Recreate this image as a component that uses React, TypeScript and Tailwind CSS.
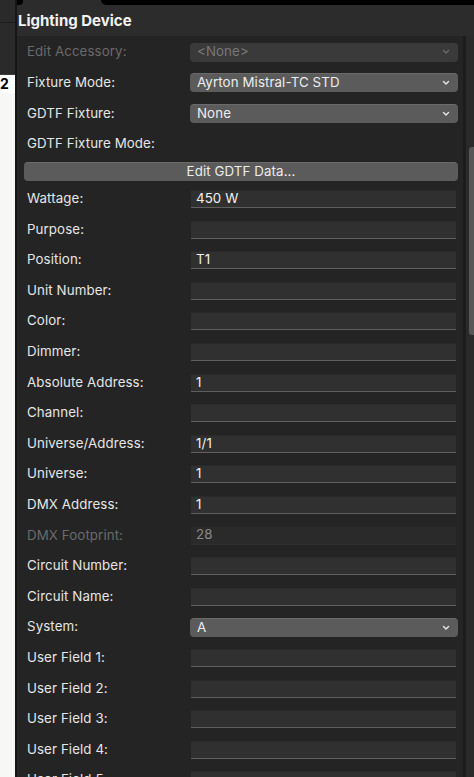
import React from "react";

type Row =
  | { kind: "select"; label: string; value: string; disabled?: boolean }
  | { kind: "text"; label: string; value?: string; disabled?: boolean }
  | { kind: "label"; label: string }
  | { kind: "button"; label: string };

const rows: Row[] = [
  { kind: "select", label: "Edit Accessory:", value: "<None>", disabled: true },
  { kind: "select", label: "Fixture Mode:", value: "Ayrton Mistral-TC STD" },
  { kind: "select", label: "GDTF Fixture:", value: "None" },
  { kind: "label", label: "GDTF Fixture Mode:" },
  { kind: "button", label: "Edit GDTF Data..." },
  { kind: "text", label: "Wattage:", value: "450 W" },
  { kind: "text", label: "Purpose:" },
  { kind: "text", label: "Position:", value: "T1" },
  { kind: "text", label: "Unit Number:" },
  { kind: "text", label: "Color:" },
  { kind: "text", label: "Dimmer:" },
  { kind: "text", label: "Absolute Address:", value: "1" },
  { kind: "text", label: "Channel:" },
  { kind: "text", label: "Universe/Address:", value: "1/1" },
  { kind: "text", label: "Universe:", value: "1" },
  { kind: "text", label: "DMX Address:", value: "1" },
  { kind: "text", label: "DMX Footprint:", value: "28", disabled: true },
  { kind: "text", label: "Circuit Number:" },
  { kind: "text", label: "Circuit Name:" },
  { kind: "select", label: "System:", value: "A" },
  { kind: "text", label: "User Field 1:" },
  { kind: "text", label: "User Field 2:" },
  { kind: "text", label: "User Field 3:" },
  { kind: "text", label: "User Field 4:" },
  { kind: "text", label: "User Field 5:" },
];

function Chevron({ dim }: { dim?: boolean }) {
  return (
    <svg width="8" height="6" viewBox="0 0 8 6" className="shrink-0">
      <path
        d="M1.5 1.5 L4 4 L6.5 1.5"
        fill="none"
        stroke={dim ? "#6b6b6b" : "#e8e8e8"}
        strokeWidth="1.4"
        strokeLinecap="round"
        strokeLinejoin="round"
      />
    </svg>
  );
}

function FieldRow({ row }: { row: Row }) {
  if (row.kind === "button") {
    return (
      <div className="h-[24.4px] flex items-center pl-[7px] pr-[5px]">
        <div className="w-full h-[19px] rounded-[4px] bg-[#5b5b5b] border-t border-[#6a6a6a] flex items-center justify-center text-[#ececec]">
          {row.label}
        </div>
      </div>
    );
  }

  const disabled = "disabled" in row && row.disabled;

  return (
    <div className="h-[30.6px] flex items-center">
      <div
        className={`w-[173px] pl-[10px] shrink-0 whitespace-nowrap ${
          disabled ? "text-[#6a6a6a]" : "text-[#e6e6e6]"
        }`}
      >
        {row.label}
      </div>
      {row.kind === "select" && (
        <div
          className={`w-[268px] h-[19px] rounded-[4px] flex items-center justify-between pl-[7px] pr-[8px] ${
            disabled
              ? "bg-[#3a3a3a] text-[#777777]"
              : "bg-[#5b5b5b] border-t border-[#6a6a6a] text-[#ededed]"
          }`}
        >
          <span>{row.value}</span>
          <Chevron dim={disabled} />
        </div>
      )}
      {row.kind === "text" && (
        <div
          className={`ml-[1px] w-[265px] h-[18px] flex items-center pl-[5px] border-b ${
            disabled
              ? "bg-[#2a2a2a] border-[#2f2f2f] text-[#8a8a8a]"
              : "bg-[#303030] border-[#5f5f5f] border-t border-t-[#292929] text-[#f0f0f0]"
          }`}
        >
          {row.value}
        </div>
      )}
    </div>
  );
}

export default function App() {
  return (
    <div
      className="w-[474px] h-[777px] flex overflow-hidden bg-[#232323] text-[13.3px] tracking-[0.1px]"
      style={{ fontFamily: "Inter, 'Liberation Sans', sans-serif" }}
    >
      {/* background window edge */}
      <div className="w-[15px] shrink-0 flex flex-col">
        <div className="h-[75px] bg-[#2a2a2a] border-b border-[#3a3a3a] flex flex-col">
          <div className="h-[23px] border-b border-[#1d1d1d]" />
        </div>
        <div className="h-[18px] bg-white overflow-hidden flex items-center">
          <span className="font-bold text-black text-[14px] leading-none">2</span>
        </div>
        <div className="flex-1 bg-[#f7f7f5]" />
      </div>

      {/* inspector panel */}
      <div className="flex-1 flex flex-col border-l-2 border-[#161616] min-w-0">
        <div className="h-[36px] shrink-0 bg-[#2c2c2c] flex flex-col">
          <div className="h-[5px] flex">
            <div className="w-[6px] bg-black rounded-br-[4px]" />
            <div className="w-[78px]" />
            <div className="flex-1 bg-black rounded-bl-[5px]" />
          </div>
          <div className="flex-1 flex items-center pl-[1px] pt-[1px] font-bold text-[15px] tracking-normal text-[#f2f2f2]">
            Lighting Device
          </div>
        </div>

        <div className="flex-1 flex min-h-0">
          <div className="flex-1 min-w-0 overflow-hidden pt-[1px] bg-[#242424]">
            {rows.map((r, i) => (
              <FieldRow key={i} row={r} />
            ))}
          </div>
          {/* scrollbar */}
          <div className="w-[11px] shrink-0 border-l-[3px] border-[#1c1c1c] bg-[#2a2a2a] pt-[111px] pl-[3px]">
            <div className="h-[188px] w-[6px] rounded-l-[3px] bg-[#575757]" />
          </div>
        </div>
      </div>
    </div>
  );
}
